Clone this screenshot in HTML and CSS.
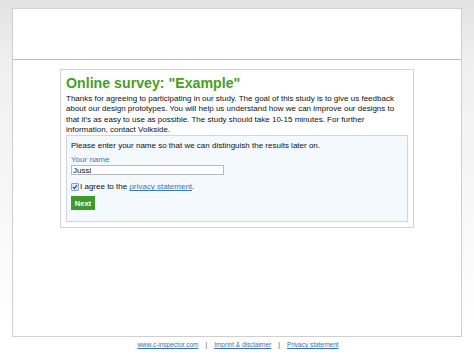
FILE: index.html
```html
<!DOCTYPE html>
<html>
<head>
<meta charset="utf-8">
<link rel="stylesheet" href="styles.css">
</head>
<body>
<div class="page">
  <div class="panel">
    <div class="header"></div>
    <div class="content">
      <div class="survey">
        <h1 class="title">Online survey: "Example"</h1>
        <p class="intro">Thanks for agreeing to participating in our study. The goal of this study is to give us feedback about our design prototypes. You will help us understand how we can improve our designs to that it's as easy to use as possible. The study should take 10-15 minutes. For further information, contact Volkside.</p>
        <div class="form">
          <p class="lead">Please enter your name so that we can distinguish the results later on.</p>
          <label class="label" for="name">Your name</label>
          <input class="input" id="name" type="text" value="Jussi">
          <div class="agree">
            <span class="check"><svg width="6" height="6" viewBox="0 0 6 6"><path d="M1 3 L2.5 4.5 L5 1" fill="none" stroke="#1f4f8a" stroke-width="1.2"/></svg></span>
            <span>I agree to the <a class="link" href="#">privacy statement</a>.</span>
          </div>
          <button class="next" type="button">Next</button>
        </div>
      </div>
    </div>
  </div>
  <div class="footer">
    <a class="flink" href="#">www.c-inspector.com</a>
    <span class="sep">|</span>
    <a class="flink" href="#">Imprint &amp; disclaimer</a>
    <span class="sep">|</span>
    <a class="flink" href="#">Privacy statement</a>
  </div>
</div>
</body>
</html>
```
FILE: styles.css
```css
html, body {
  margin: 0;
  padding: 0;
}
body {
  width: 474px;
  height: 362px;
  overflow: hidden;
  background: linear-gradient(#e2e2e2 0px, #efefef 60px, #f7f7f7 200px, #ffffff 330px);
  font-family: "Liberation Sans", Arial, sans-serif;
  color: #111;
}
.page {
  padding: 8px 12px 0;
}
.panel {
  background: #fff;
  border: 1px solid #cfcfcf;
  box-sizing: border-box;
  height: 329px;
}
.header {
  height: 50px;
  border-bottom: 1px solid #a8c2d8;
}
.content {
  padding: 9px 0 0 47px;
}
.survey {
  width: 354px;
  box-sizing: border-box;
  border: 1px solid #d4d4d4;
  padding: 5px 5px 5px;
}
.title {
  margin: 0;
  font-size: 14.2px;
  line-height: 17px;
  font-weight: bold;
  color: #45a01e;
}
.intro {
  margin: 2px 0 0;
  font-size: 8px;
  line-height: 10.3px;
}
.form {
  border: 1px solid #cfd6dc;
  background: #f4f9fd;
  padding: 4px 4px 11px;
  font-size: 8px;
  line-height: 11px;
  display: flex;
  flex-direction: column;
  align-items: flex-start;
}
.lead {
  margin: 0 0 3px;
}
.label {
  color: #3a78b8;
  line-height: 11px;
}
.input {
  width: 153px;
  height: 10px;
  box-sizing: border-box;
  border: 1px solid #b9b9b9;
  padding: 0 1px;
  margin: 0;
  font-family: "Liberation Sans", Arial, sans-serif;
  font-size: 8px;
  line-height: 8px;
  color: #111;
  background: #fff;
}
.agree {
  display: flex;
  align-items: center;
  gap: 1px;
  margin-top: 6px;
}
.check {
  width: 6px;
  height: 6px;
  border: 1px solid #8aa6c4;
  background: #dce8f5;
  display: flex;
  align-items: center;
  justify-content: center;
  border-radius: 1px;
}
.check svg {
  display: block;
}
.link {
  color: #3a78b8;
}
.next {
  margin-top: 4px;
  width: 24px;
  height: 14px;
  border: none;
  background: #3c9b2a;
  color: #fff;
  font-family: "Liberation Sans", Arial, sans-serif;
  font-size: 7.5px;
  font-weight: bold;
  padding: 0;
}
.footer {
  display: flex;
  justify-content: center;
  gap: 7px;
  margin-top: 3px;
  font-size: 6.5px;
  line-height: 10px;
  color: #555;
  padding-left: 2px;
}
.flink {
  color: #3a6fb0;
}
.sep {
  color: #444;
}
```
